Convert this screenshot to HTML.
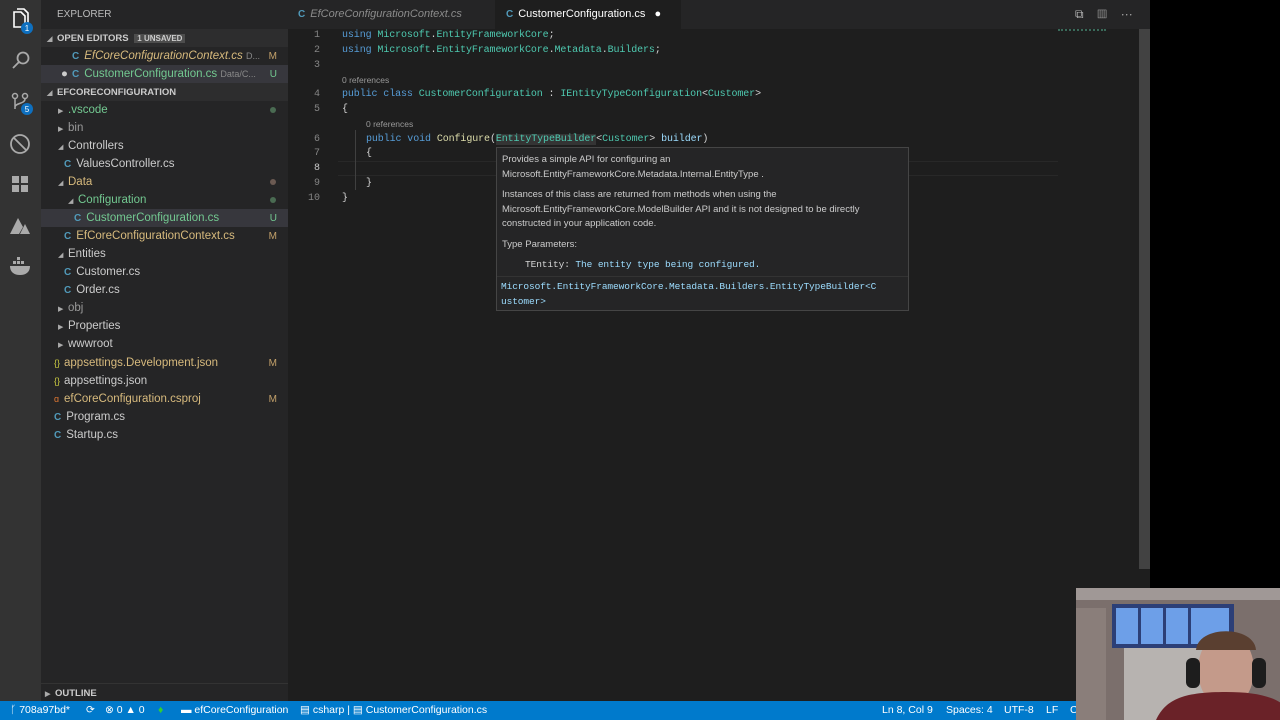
<!DOCTYPE html>
<html><head><meta charset="utf-8"><style>
*{margin:0;padding:0;box-sizing:border-box}
body{width:1280px;height:720px;background:#000;position:relative;overflow:hidden;font-family:"Liberation Sans",sans-serif;font-size:11px;color:#ccc}
.a{position:absolute;white-space:nowrap}
#act{left:0;top:0;width:41px;height:701px;background:#333}
#side{left:41px;top:0;width:247px;height:701px;background:#252526}
#ed{left:288px;top:0;width:862px;height:701px;background:#1e1e1e}
#tabs{left:288px;top:0;width:862px;height:29px;background:#252526}
#status{left:0;top:701px;width:1150px;height:19px;background:#007acc;color:#fff;font-size:10.5px}
.row{position:absolute;left:41px;width:247px;height:18px;line-height:19px;font-size:11.5px}
.cs{color:#519aba;font-weight:bold;font-size:10px;margin-right:5px}
.tri{color:#aaa;font-size:7px;display:inline-block;width:10px}
.m{position:absolute;right:11px;top:0;color:#c3a16a;font-size:10px}
.u{position:absolute;right:11px;top:0;color:#73c991;font-size:10px}
.dot{position:absolute;right:12px;top:6px;width:6px;height:6px;border-radius:50%}
.code{font-family:"Liberation Mono",monospace;font-size:10px;letter-spacing:-0.1px;color:#d4d4d4}
.ln{position:absolute;width:32px;text-align:right;left:288px;font-family:"Liberation Mono",monospace;font-size:10px;color:#858585}
.k{color:#569cd6}.t{color:#4ec9b0}.f{color:#dcdcaa}.v{color:#9cdcfe}
.cl{font-size:8.5px;color:#999}
</style></head><body>
<div class="a" id="act"></div>
<div class="a" id="side"></div>
<div class="a" id="ed"></div>
<div class="a" id="tabs"></div>

<svg class="a" style="left:0;top:0" width="41" height="300">
<g fill="none" stroke="#fff" stroke-width="1.6"><path d="M14 12h7l4 4v11h-11z"/><path d="M17 9h7l4 4v11"/></g>
<circle cx="27" cy="28" r="6" fill="#0e70c0"/><text x="27" y="31" font-size="8" fill="#fff" text-anchor="middle" font-family="Liberation Sans">1</text>
<g fill="none" stroke="#aaa" stroke-width="1.8"><circle cx="23" cy="58" r="5.5"/><path d="M19 62l-6 6"/></g>
<g fill="none" stroke="#aaa" stroke-width="1.5"><circle cx="15" cy="96" r="2.5"/><circle cx="25" cy="96" r="2.5"/><path d="M15 99v10M25 99c0 5-10 4-10 8"/></g>
<circle cx="27" cy="109" r="6" fill="#0e70c0"/><text x="27" y="112" font-size="8" fill="#fff" text-anchor="middle" font-family="Liberation Sans">5</text>
<g fill="none" stroke="#aaa" stroke-width="1.8"><circle cx="20" cy="144" r="9"/><path d="M14 138l12 12"/></g>
<g fill="#aaa"><rect x="12" y="176" width="7" height="7"/><rect x="21" y="176" width="7" height="7"/><rect x="12" y="185" width="7" height="7"/><rect x="21" y="185" width="7" height="7"/></g>
<path d="M10 234l8-16 5 9-4 7zM20 234l5-10 5 10z" fill="#aaa"/>
<path d="M10 266h20c0 6-4 9-10 9s-10-3-10-9z" fill="#aaa"/><g fill="#aaa"><rect x="13" y="261" width="3" height="3"/><rect x="17" y="261" width="3" height="3"/><rect x="21" y="261" width="3" height="3"/><rect x="17" y="257" width="3" height="3"/></g>
<g transform="translate(20 681)" fill="#aaa"><circle r="5.5"/><g stroke="#aaa" stroke-width="2.5"><path d="M0-8v16M-8 0h16M-5.5-5.5l11 11M5.5-5.5l-11 11"/></g><circle r="2" fill="#333"/></g>
</svg>

<div class="a" style="left:57px;top:9px;font-size:10px;color:#bbb">EXPLORER</div>
<div class="row" style="top:29px;background:#2d2d2e"><span style="position:absolute;left:6px;color:#ccc;font-size:9.5px;font-weight:bold"><span class="tri">◢</span>OPEN EDITORS <span style="background:#4d4d4d;padding:0 3px;font-size:8px;margin-left:3px">1 UNSAVED</span></span></div>
<div class="row" style="top:47px;color:#d7ba7d"><span style="position:absolute;left:31px"><span class="cs">C</span><i>EfCoreConfigurationContext.cs</i> <span style="color:#888;font-size:9px">D...</span></span><span class="m">M</span></div>
<div class="row" style="top:65px;background:#37373d;color:#73c991"><span style="position:absolute;left:20px;color:#ccc">●</span><span style="position:absolute;left:31px"><span class="cs">C</span>CustomerConfiguration.cs <span style="color:#888;font-size:9px">Data/C...</span></span><span class="u">U</span></div>
<div class="row" style="top:83px;background:#2d2d2e"><span style="position:absolute;left:6px;font-size:9.5px;font-weight:bold"><span class="tri">◢</span>EFCORECONFIGURATION</span></div>
<div class="row" style="top:101px;color:#73c991"><span style="position:absolute;left:17px"><span class="tri">▶</span>.vscode</span><span class="dot" style="background:#4a6b52"></span></div>
<div class="row" style="top:119px;color:#999"><span style="position:absolute;left:17px"><span class="tri">▶</span>bin</span></div>
<div class="row" style="top:137px"><span style="position:absolute;left:17px"><span class="tri">◢</span>Controllers</span></div>
<div class="row" style="top:155px"><span style="position:absolute;left:23px"><span class="cs">C</span>ValuesController.cs</span></div>
<div class="row" style="top:173px;color:#d7ba7d"><span style="position:absolute;left:17px"><span class="tri">◢</span>Data</span><span class="dot" style="background:#6b5a52"></span></div>
<div class="row" style="top:191px;color:#73c991"><span style="position:absolute;left:27px"><span class="tri">◢</span>Configuration</span><span class="dot" style="background:#4a6b52"></span></div>
<div class="row" style="top:209px;background:#37373d;color:#73c991"><span style="position:absolute;left:33px"><span class="cs">C</span>CustomerConfiguration.cs</span><span class="u">U</span></div>
<div class="row" style="top:227px;color:#d7ba7d"><span style="position:absolute;left:23px"><span class="cs">C</span>EfCoreConfigurationContext.cs</span><span class="m">M</span></div>
<div class="row" style="top:245px"><span style="position:absolute;left:17px"><span class="tri">◢</span>Entities</span></div>
<div class="row" style="top:263px"><span style="position:absolute;left:23px"><span class="cs">C</span>Customer.cs</span></div>
<div class="row" style="top:281px"><span style="position:absolute;left:23px"><span class="cs">C</span>Order.cs</span></div>
<div class="row" style="top:299px;color:#999"><span style="position:absolute;left:17px"><span class="tri">▶</span>obj</span></div>
<div class="row" style="top:317px"><span style="position:absolute;left:17px"><span class="tri">▶</span>Properties</span></div>
<div class="row" style="top:335px"><span style="position:absolute;left:17px"><span class="tri">▶</span>wwwroot</span></div>
<div class="row" style="top:354px;color:#d7ba7d"><span style="position:absolute;left:13px"><span style="color:#cbcb41;font-size:9px;margin-right:4px">{}</span>appsettings.Development.json</span><span class="m">M</span></div>
<div class="row" style="top:372px"><span style="position:absolute;left:13px"><span style="color:#cbcb41;font-size:9px;margin-right:4px">{}</span>appsettings.json</span></div>
<div class="row" style="top:390px;color:#d7ba7d"><span style="position:absolute;left:13px"><span style="color:#e37933;font-size:9px;margin-right:5px">ɑ</span>efCoreConfiguration.csproj</span><span class="m">M</span></div>
<div class="row" style="top:408px"><span style="position:absolute;left:13px"><span class="cs">C</span>Program.cs</span></div>
<div class="row" style="top:426px"><span style="position:absolute;left:13px"><span class="cs">C</span>Startup.cs</span></div>
<div class="row" style="top:683px;border-top:1px solid #333"><span style="position:absolute;left:4px;font-size:9.5px;font-weight:bold"><span class="tri">▶</span>OUTLINE</span></div>

<div class="a" style="left:298px;top:8px;color:#8b8b8b;font-size:11px"><span class="cs">C</span><i>EfCoreConfigurationContext.cs</i></div>
<div class="a" style="left:495px;top:0;width:186px;height:29px;background:#1e1e1e"></div>
<div class="a" style="left:506px;top:8px;color:#fff;font-size:11px"><span class="cs">C</span>CustomerConfiguration.cs <span style="margin-left:6px">●</span></div>
<div class="a" style="left:1075px;top:7px;color:#bbb;font-size:12px;letter-spacing:14px">⧉▥⋯</div>

<div class="ln" style="top:30px">1</div><div class="ln" style="top:45px">2</div><div class="ln" style="top:60px">3</div><div class="ln" style="top:89px">4</div><div class="ln" style="top:104px">5</div><div class="ln" style="top:134px">6</div><div class="ln" style="top:148px">7</div><div class="ln" style="top:163px;color:#c6c6c6">8</div><div class="ln" style="top:178px">9</div><div class="ln" style="top:193px">10</div>
<div class="a" style="left:338px;top:161px;width:720px;height:15px;border-top:1px solid #282828;border-bottom:1px solid #282828"></div>
<div class="a code" style="left:342px;top:30px"><span class="k">using</span> <span class="t">Microsoft</span>.<span class="t">EntityFrameworkCore</span>;</div>
<div class="a code" style="left:342px;top:45px"><span class="k">using</span> <span class="t">Microsoft</span>.<span class="t">EntityFrameworkCore</span>.<span class="t">Metadata</span>.<span class="t">Builders</span>;</div>
<div class="a cl" style="left:342px;top:75px">0 references</div>
<div class="a code" style="left:342px;top:89px"><span class="k">public class</span> <span class="t">CustomerConfiguration</span> : <span class="t">IEntityTypeConfiguration</span>&lt;<span class="t">Customer</span>&gt;</div>
<div class="a code" style="left:342px;top:104px">{</div>
<div class="a cl" style="left:366px;top:119px">0 references</div>
<div class="a code" style="left:366px;top:134px"><span class="k">public void</span> <span class="f">Configure</span>(<span class="t" style="background:#343434">EntityTypeBuilder</span>&lt;<span class="t">Customer</span>&gt; <span class="v">builder</span>)</div>
<div class="a code" style="left:366px;top:148px">{</div>
<div class="a code" style="left:366px;top:178px">}</div>
<div class="a code" style="left:342px;top:193px">}</div>
<div class="a" style="left:355px;top:130px;width:1px;height:60px;background:#404040"></div>

<div class="a" style="left:496px;top:147px;width:413px;height:164px;background:#252526;border:1px solid #454545;font-size:9.5px;color:#ccc;line-height:14.5px">
<div style="position:absolute;left:5px;top:5px">Provides a simple API for configuring an<br>Microsoft.EntityFrameworkCore.Metadata.Internal.EntityType .</div>
<div style="position:absolute;left:5px;top:40px">Instances of this class are returned from methods when using the<br>Microsoft.EntityFrameworkCore.ModelBuilder API and it is not designed to be directly<br>constructed in your application code.</div>
<div style="position:absolute;left:5px;top:90px">Type Parameters:</div>
<div class="code" style="position:absolute;left:28px;top:110px;font-size:9.5px">TEntity:  <span class="v">The entity type being configured.</span></div>
<div style="position:absolute;left:0;top:128px;width:411px;height:34px;border-top:1px solid #333"></div>
<div class="code v" style="position:absolute;left:4px;top:132px;font-size:9.5px;line-height:14.5px">Microsoft.EntityFrameworkCore.Metadata.Builders.EntityTypeBuilder&lt;C<br>ustomer&gt;</div>
</div>

<div class="a" style="left:1139px;top:29px;width:11px;height:540px;background:#424242"></div>
<div class="a" style="left:1058px;top:29px;width:48px;height:12px;border-top:2px dotted #3a6a5a"></div>

<div class="a" id="status">
<span class="a" style="left:10px;top:3px">ᚴ 708a97bd*</span>
<span class="a" style="left:86px;top:3px">⟳</span>
<span class="a" style="left:105px;top:3px">⊗ 0 ▲ 0</span>
<span class="a" style="left:158px;top:3px;color:#3c3">♦</span>
<span class="a" style="left:181px;top:3px">▬ efCoreConfiguration</span>
<span class="a" style="left:300px;top:3px">▤ csharp | ▤ CustomerConfiguration.cs</span>
<span class="a" style="left:882px;top:3px">Ln 8, Col 9</span>
<span class="a" style="left:946px;top:3px">Spaces: 4</span>
<span class="a" style="left:1004px;top:3px">UTF-8</span>
<span class="a" style="left:1046px;top:3px">LF</span>
<span class="a" style="left:1070px;top:3px">C</span>
</div>

<svg class="a" style="left:1076px;top:588px" width="204" height="132">
<rect width="204" height="132" fill="#7b6f6c"/>
<rect x="0" y="0" width="204" height="12" fill="#a09896"/>
<rect x="36" y="16" width="122" height="44" fill="#2c3f77"/>
<g fill="#6d9fe8"><rect x="40" y="20" width="22" height="36"/><rect x="65" y="20" width="22" height="36"/><rect x="90" y="20" width="22" height="36"/><rect x="115" y="20" width="38" height="36"/></g>
<rect x="48" y="60" width="80" height="72" fill="#b7b3b0"/>
<rect x="0" y="20" width="30" height="112" fill="#8a7e7a"/>
<ellipse cx="150" cy="82" rx="28" ry="38" fill="#c49a8a"/>
<path d="M120 62c2-25 58-25 60 0" fill="#5a3f30"/>
<rect x="110" y="70" width="14" height="30" rx="6" fill="#1d1d1d"/><rect x="176" y="70" width="14" height="30" rx="6" fill="#1d1d1d"/>
<path d="M80 132c10-22 30-28 70-28s60 8 70 28z" fill="#6a2228"/>
</svg>
</body></html>
